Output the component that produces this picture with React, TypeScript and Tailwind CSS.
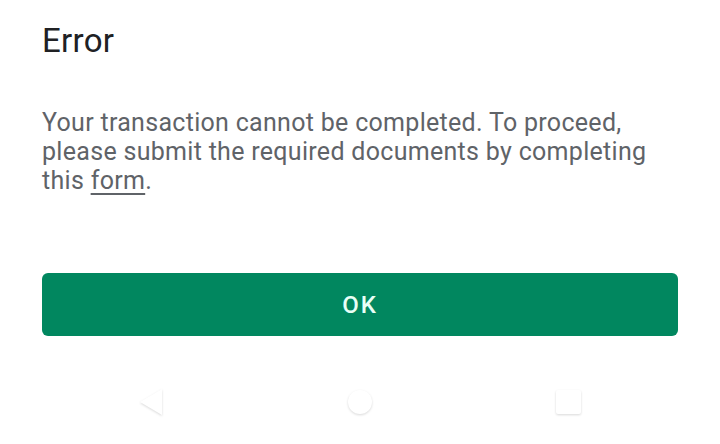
export default function App() {
  return (
    <main
      className="flex h-[444px] w-[720px] flex-col overflow-hidden bg-white"
      style={{ fontFamily: "Roboto, 'Liberation Sans', sans-serif" }}
    >
      <div className="px-[42px] pt-[21px]">
        <h1 className="text-[33px] leading-[40px] font-normal tracking-[0.3px] text-[#202124]">Error</h1>
        <p className="mt-[47px] text-[25px] leading-[29px] tracking-[0.3px] text-[#5f6368]">
          Your transaction cannot be completed. To proceed, please submit the required documents by
          completing this <span className="underline underline-offset-[4px]">form</span>.
        </p>
        <button className="mt-[78px] flex h-[63px] w-full items-center justify-center rounded-[6px] bg-[#01875f] text-[24px] font-medium tracking-[2px] text-[#e8fff6]">
          OK
        </button>
      </div>

      {/* nav bar, white on white */}
      <div className="mt-auto mb-[26px] flex items-center justify-center gap-[178px]">
        <svg width="30" height="32" viewBox="0 0 30 32" className="drop-shadow-[0_1px_1px_rgba(0,0,0,0.15)]">
          <path d="M25 3 L25 29 L3 16 Z" fill="#fff" />
        </svg>
        <svg width="30" height="30" viewBox="0 0 30 30" className="drop-shadow-[0_1px_1px_rgba(0,0,0,0.15)]">
          <circle cx="15" cy="15" r="12" fill="#fff" />
        </svg>
        <svg width="30" height="30" viewBox="0 0 30 30" className="drop-shadow-[0_1px_1px_rgba(0,0,0,0.15)]">
          <rect x="3" y="3" width="25" height="24" rx="2" fill="#fff" />
        </svg>
      </div>
    </main>
  );
}
